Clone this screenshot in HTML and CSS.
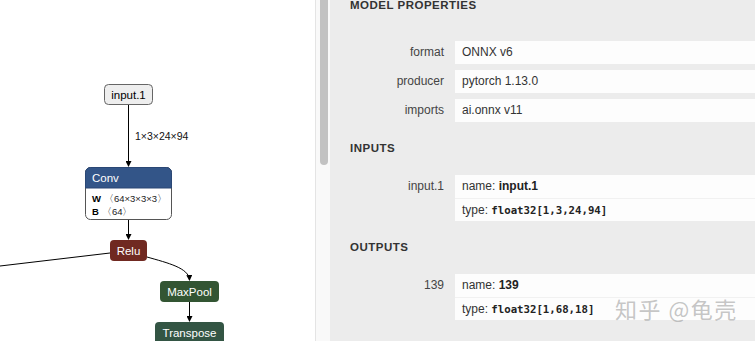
FILE: index.html
```html
<!DOCTYPE html>
<html lang="en">
<head>
    <meta charset="UTF-8">
    <meta name="viewport" content="width=device-width, initial-scale=1.0">
    <title>Model Properties</title>
    <link rel="stylesheet" href="styles.css">
</head>
<body>
    <div class="graph">
        <svg width="315" height="341" viewBox="0 0 315 341">
            <defs>
                <marker id="arrow" markerWidth="6" markerHeight="6" refX="5" refY="3" orient="auto" markerUnits="userSpaceOnUse">
                    <path d="M0,0 L6,3 L0,6 Z" fill="#000"/>
                </marker>
            </defs>

            <!-- edges -->
            <line class="edge" x1="128.5" y1="104" x2="128.5" y2="166" marker-end="url(#arrow)"/>
            <text class="edge-label" x="135" y="140">1×3×24×94</text>
            <line class="edge" x1="128.5" y1="220" x2="128.5" y2="239" marker-end="url(#arrow)"/>
            <line class="edge" x1="110" y1="253" x2="0" y2="266"/>
            <path class="edge" d="M147,257 C168,263 189,268 189.5,280" fill="none" marker-end="url(#arrow)"/>
            <line class="edge" x1="189.5" y1="302" x2="189.5" y2="321" marker-end="url(#arrow)"/>

            <!-- input.1 -->
            <rect class="node-input" x="104.5" y="84.5" width="48" height="20" rx="4"/>
            <text class="node-text dark" x="128.5" y="99">input.1</text>

            <!-- Conv -->
            <rect class="node-body" x="85.5" y="167.5" width="86" height="52" rx="5"/>
            <path class="conv-head" d="M85.5,188 V172.5 a5,5 0 0 1 5,-5 H166.5 a5,5 0 0 1 5,5 V188 Z"/>
            <text class="node-text light left" x="92" y="182">Conv</text>
            <text class="attr" x="92" y="202"><tspan class="attr-name">W</tspan><tspan dx="3">〈64×3×3×3〉</tspan></text>
            <text class="attr" x="92" y="215"><tspan class="attr-name">B</tspan><tspan dx="3">〈64〉</tspan></text>

            <!-- Relu -->
            <rect class="relu" x="110" y="240" width="37" height="21" rx="4"/>
            <text class="node-text light" x="128.5" y="255">Relu</text>

            <!-- MaxPool -->
            <rect class="pool" x="160" y="281" width="59" height="21" rx="4"/>
            <text class="node-text light" x="189.5" y="296">MaxPool</text>

            <!-- Transpose -->
            <rect class="transform" x="155" y="322" width="69" height="24" rx="4"/>
            <text class="node-text light" x="189.5" y="337">Transpose</text>
        </svg>
    </div>

    <div class="scrollbar">
        <div class="thumb"></div>
    </div>

    <div class="sidebar">
        <div class="section-title first">MODEL PROPERTIES</div>
        <div class="props">
            <div class="prop-name">format</div>
            <div class="prop-value">ONNX v6</div>
            <div class="prop-name">producer</div>
            <div class="prop-value">pytorch 1.13.0</div>
            <div class="prop-name">imports</div>
            <div class="prop-value">ai.onnx v11</div>
        </div>

        <div class="section-title">INPUTS</div>
        <div class="props">
            <div class="prop-name">input.1</div>
            <div class="prop-value multi">
                <div class="line">name: <b>input.1</b></div>
                <div class="line">type: <code>float32[1,3,24,94]</code></div>
            </div>
        </div>

        <div class="section-title">OUTPUTS</div>
        <div class="props">
            <div class="prop-name">139</div>
            <div class="prop-value multi">
                <div class="line">name: <b>139</b></div>
                <div class="line">type: <code>float32[1,68,18]</code></div>
            </div>
        </div>

        <div class="watermark">知乎 @龟壳</div>
    </div>
</body>
</html>
```

FILE: styles.css
```css
body {
    margin: 0;
    display: flex;
    width: 755px;
    height: 341px;
    overflow: hidden;
    font-family: "Liberation Sans", Arial, sans-serif;
    background-color: #fff;
}

.graph {
    width: 315px;
    flex-shrink: 0;
    background-color: #fff;
}

.graph svg {
    display: block;
}

.edge {
    stroke: #000;
    stroke-width: 1;
}

.edge-label {
    font-size: 10.5px;
    fill: #111;
}

.node-text {
    font-size: 11.5px;
    text-anchor: middle;
}

.node-text.left {
    text-anchor: start;
}

.node-text.dark {
    fill: #000;
}

.node-text.light {
    fill: #fff;
}

.node-input {
    fill: #eee;
    stroke: #666;
    stroke-width: 1;
}

.node-body {
    fill: #fff;
    stroke: #555;
    stroke-width: 1;
}

.conv-head {
    fill: #335588;
    stroke: #2a4775;
    stroke-width: 1;
}

.relu {
    fill: #702921;
}

.pool {
    fill: #335533;
}

.transform {
    fill: #335544;
}

.attr {
    font-size: 9.5px;
    fill: #222;
}

.attr-name {
    font-weight: bold;
    fill: #000;
}

.scrollbar {
    width: 14px;
    flex-shrink: 0;
    border-left: 1px solid #e4e4e4;
    background-color: #f9f9f9;
    display: flex;
    justify-content: center;
}

.thumb {
    width: 8px;
    height: 165px;
    margin-left: 1px;
    background-color: #c2c2c2;
    border-radius: 0 0 4px 4px;
}

.sidebar {
    position: relative;
    flex: 1;
    background-color: #ececec;
    padding-left: 20px;
    color: #333;
    font-size: 12px;
    overflow: hidden;
}

.section-title {
    font-size: 11.5px;
    font-weight: bold;
    letter-spacing: 0.5px;
    line-height: 14px;
    height: 14px;
    color: #333;
    margin: 19px 0 20px 0;
}

.section-title.first {
    margin-top: -2px;
    margin-bottom: 29px;
}

.props {
    display: grid;
    grid-template-columns: 94px 1fr;
    column-gap: 11px;
    row-gap: 6px;
}

.prop-name {
    text-align: right;
    line-height: 23px;
    color: #444;
}

.prop-value {
    background-color: #fdfdfd;
    line-height: 23px;
    padding-left: 7px;
    color: #333;
    white-space: nowrap;
}

.prop-value.multi {
    padding-left: 0;
}

.prop-value .line {
    padding-left: 7px;
    height: 23px;
}

.prop-value .line + .line {
    border-top: 1px solid #f1f1f1;
    height: 22px;
    line-height: 22px;
}

.prop-value b {
    color: #222;
}

.prop-value code {
    font-family: "DejaVu Sans Mono", "Liberation Mono", monospace;
    font-weight: bold;
    font-size: 10.7px;
    color: #222;
}

.watermark {
    position: absolute;
    left: 285px;
    top: 295px;
    font-family: "Noto Sans CJK SC", sans-serif;
    font-size: 22px;
    line-height: 26px;
    color: rgba(150, 150, 150, 0.55);
    letter-spacing: 1.5px;
    white-space: nowrap;
}
```
